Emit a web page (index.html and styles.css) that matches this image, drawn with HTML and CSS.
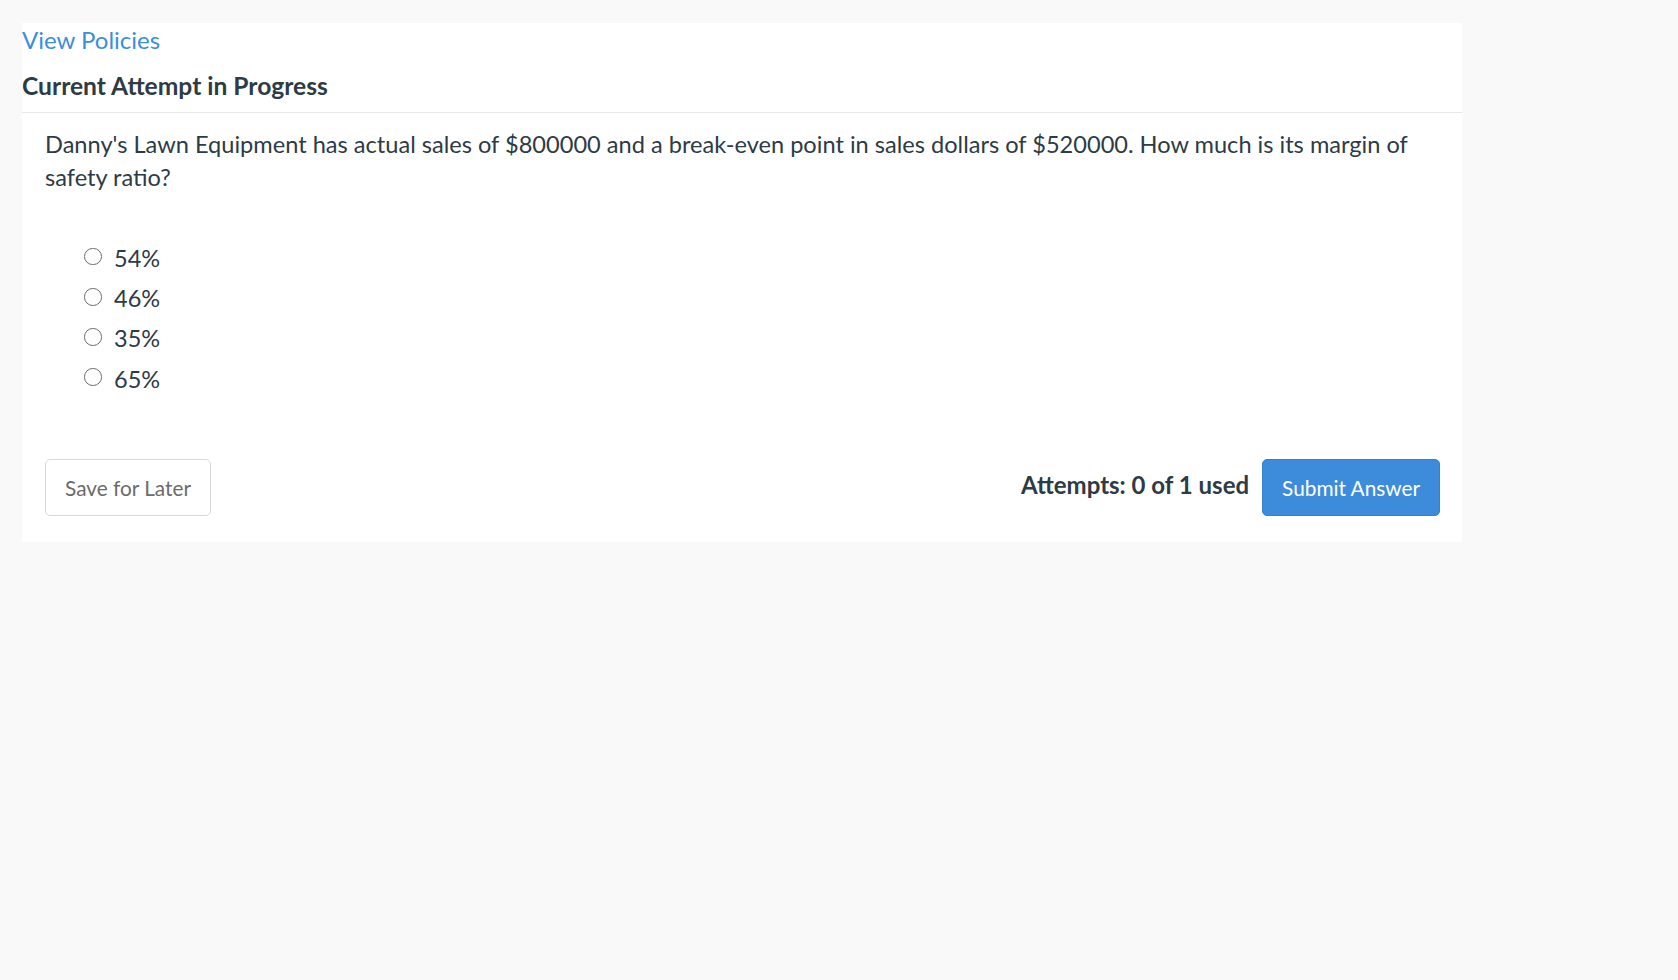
FILE: index.html
```html
<!DOCTYPE html>
<html lang="en">
<head>
<meta charset="utf-8">
<title>Current Attempt in Progress</title>
<link rel="stylesheet" href="styles.css">
</head>
<body>
  <div class="card">
    <div class="card-head">
      <a class="policies" href="#">View Policies</a>
      <h2 class="heading">Current Attempt in Progress</h2>
    </div>
    <div class="card-body">
      <p class="question">Danny's Lawn Equipment has actual sales of $800000 and a break-even point in sales dollars of $520000. How much is its margin of safety ratio?</p>
      <ul class="options">
        <li class="option"><span class="radio"></span><span class="label">54%</span></li>
        <li class="option"><span class="radio"></span><span class="label">46%</span></li>
        <li class="option"><span class="radio"></span><span class="label">35%</span></li>
        <li class="option"><span class="radio"></span><span class="label">65%</span></li>
      </ul>
      <div class="actions">
        <button class="btn btn-save" type="button">Save for Later</button>
        <div class="submit-group">
          <span class="attempts">Attempts: 0 of 1 used</span>
          <button class="btn btn-submit" type="button">Submit Answer</button>
        </div>
      </div>
    </div>
  </div>
</body>
</html>
```
FILE: styles.css
```css
* { box-sizing: border-box; }

html, body {
  margin: 0;
  background: #f9f9f9;
}

body {
  padding: 23px 22px;
  font-family: Lato, "Open Sans", "Liberation Sans", sans-serif;
  color: #2d3b45;
}

.card {
  width: 1440px;
  background: #ffffff;
}

.card-head {
  padding: 1.5px 0 12.5px;
  border-bottom: 1px solid #e8e8e8;
}

.policies {
  display: block;
  width: max-content;
  font-size: 24px;
  line-height: 29px;
  color: #3b8edd;
  text-decoration: none;
}

.heading {
  margin: 17px 0 0;
  font-size: 24.6px;
  line-height: 29px;
  font-weight: 700;
  color: #2d3b45;
}

.card-body {
  padding: 15px 22px 26px 23px;
}

.question {
  margin: 0;
  font-size: 23.6px;
  line-height: 33px;
  color: #2d3b45;
}

.options {
  list-style: none;
  margin: 44px 0 0;
  padding: 0 0 0 39px;
}

.option {
  display: flex;
  align-items: center;
  height: 40.2px;
  font-size: 23.5px;
  color: #2d3b45;
}

.radio {
  flex: none;
  width: 17.5px;
  height: 17.5px;
  margin: 0 12.5px 3px 0;
  border: 1.5px solid #6c6c6c;
  border-radius: 50%;
  background: #fff;
}

.actions {
  display: flex;
  justify-content: space-between;
  align-items: center;
  margin-top: 60.5px;
}

.submit-group {
  display: flex;
  align-items: center;
  gap: 13px;
}

.attempts {
  font-size: 24px;
  font-weight: 700;
  line-height: 29px;
  margin-bottom: 6px;
  color: #2d3b45;
}

.btn {
  height: 56.5px;
  padding: 0 19px;
  font-family: inherit;
  font-size: 20.8px;
  border-radius: 5px;
  cursor: pointer;
}

.btn-save {
  background: #ffffff;
  border: 1px solid #d9d9d9;
  color: #6b6b6b;
}

.btn-submit {
  background: #3d8cdc;
  border: 1px solid #3680cc;
  color: #ffffff;
}
```
